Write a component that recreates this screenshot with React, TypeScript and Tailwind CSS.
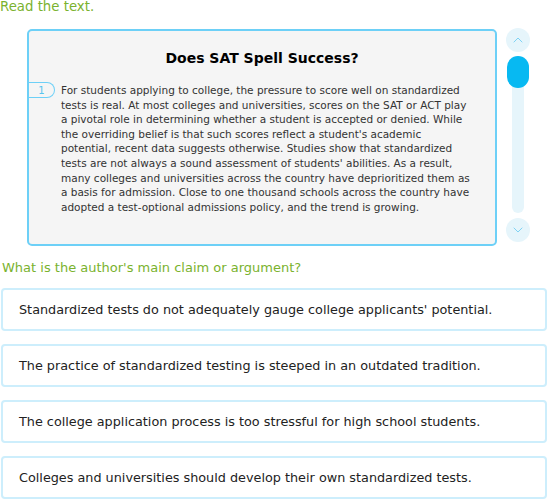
import { ChevronUp, ChevronDown } from 'lucide-react'

const answers = [
  "Standardized tests do not adequately gauge college applicants' potential.",
  'The practice of standardized testing is steeped in an outdated tradition.',
  'The college application process is too stressful for high school students.',
  'Colleges and universities should develop their own standardized tests.',
]

const passage =
  "For students applying to college, the pressure to score well on standardized tests is real. At most colleges and universities, scores on the SAT or ACT play a pivotal role in determining whether a student is accepted or denied. While the overriding belief is that such scores reflect a student's academic potential, recent data suggests otherwise. Studies show that standardized tests are not always a sound assessment of students' abilities. As a result, many colleges and universities across the country have deprioritized them as a basis for admission. Close to one thousand schools across the country have adopted a test-optional admissions policy, and the trend is growing."

function Scrollbar() {
  return (
    <div className="mt-[-1px] flex w-[24px] flex-col items-center">
      <div className="flex h-[24px] w-[24px] items-center justify-center rounded-full bg-[#e6f5fb]">
        <ChevronUp className="h-4 w-4 text-[#7fd3f4]" strokeWidth={1.5} />
      </div>
      <div className="relative mt-[4px] h-[157px] w-[12px] rounded-full bg-[#e6f5fb]">
        <div className="absolute left-[-5px] top-0 h-[32px] w-[22px] rounded-full bg-[#07b9f2]" />
      </div>
      <div className="mt-[5px] flex h-[24px] w-[24px] items-center justify-center rounded-full bg-[#e6f5fb]">
        <ChevronDown className="h-4 w-4 text-[#7fd3f4]" strokeWidth={1.5} />
      </div>
    </div>
  )
}

export default function App() {
  return (
    <div className="h-[500px] w-[548px] overflow-hidden bg-white font-['DejaVu_Sans',Verdana,sans-serif]">
      <div className="text-[13.3px] leading-[14px] text-[#7ab22e]">Read the text.</div>

      <div className="mt-[15px] flex gap-[9px] pl-[27px]">
        <div className="h-[217px] w-[470px] rounded-[5px] border-2 border-[#6dd0f7] bg-[#f5f5f5] pt-[18px]">
          <h1 className="text-center text-[14px] font-bold leading-[18px] text-black">
            Does SAT Spell Success?
          </h1>
          <div className="mt-[16px] flex">
            <div className="mt-[-1px] flex h-[16px] w-[26px] items-center justify-center rounded-r-full border border-l-0 border-[#6dd0f7] text-[10px] text-[#58c3ee]">
              1
            </div>
            <p className="ml-[6px] w-[410px] text-[10.5px] leading-[14.6px] text-[#333]">{passage}</p>
          </div>
        </div>
        <Scrollbar />
      </div>

      <div className="mt-[14px] pl-[2px] text-[13px] leading-[16px] text-[#7ab22e]">
        What is the author's main claim or argument?
      </div>

      <div className="mt-[12px] flex flex-col gap-[13px] px-[1px]">
        {answers.map((a) => (
          <div
            key={a}
            className="flex h-[43px] items-center rounded-[4px] border-2 border-[#cdeefc] bg-white pl-[16px] text-[12.8px] text-[#222]"
          >
            {a}
          </div>
        ))}
      </div>
    </div>
  )
}
